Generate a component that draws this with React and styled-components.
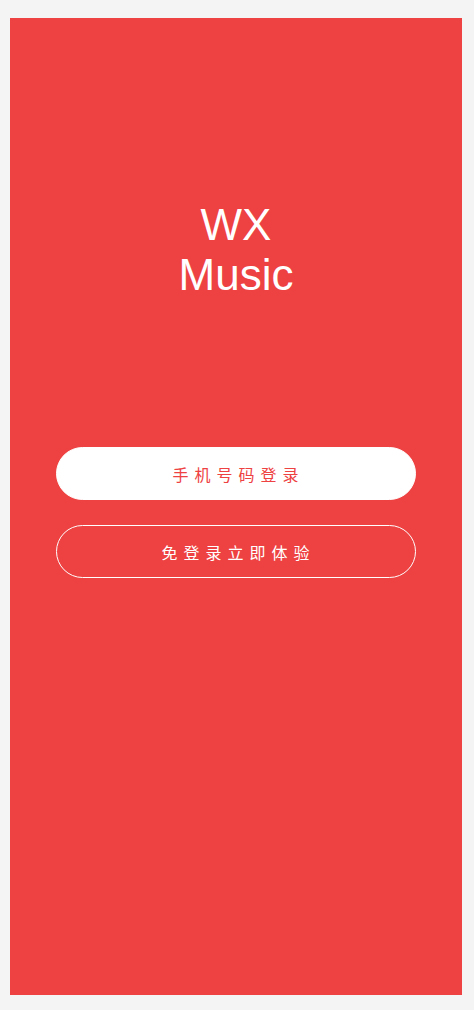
import React from "react";
import styled, { createGlobalStyle } from "styled-components";

const GlobalStyle = createGlobalStyle`
  html, body {
    margin: 0;
    padding: 0;
    background: #f4f4f4;
  }
  body {
    font-family: "Liberation Sans", "Noto Sans CJK SC", sans-serif;
  }
  * { box-sizing: border-box; }
`;

const Screen = styled.div`
  width: 474px;
  height: 1010px;
  padding: 18px 12px 15px 10px;
  background: #f4f4f4;
`;

const Panel = styled.main`
  height: 100%;
  background: #ee4141;
  display: flex;
  flex-direction: column;
  align-items: center;
`;

const Title = styled.h1`
  margin: 182px 0 0;
  font-family: "Liberation Sans", "Noto Sans", sans-serif;
  font-weight: 400;
  font-size: 44px;
  line-height: 50px;
  color: #ffffff;
  text-align: center;
`;

const Actions = styled.div`
  margin-top: 147px;
  display: flex;
  flex-direction: column;
  gap: 25px;
  width: 360px;
  margin-left: -1px;
`;

const Button = styled.button`
  height: 53px;
  width: 100%;
  border-radius: 27px;
  border: 1px solid #ffffff;
  background: ${(p) => (p.$filled ? "#ffffff" : "transparent")};
  color: ${(p) => (p.$filled ? "#ee4141" : "#ffffff")};
  font-family: "Noto Sans CJK SC", "Liberation Sans", sans-serif;
  font-size: 16px;
  letter-spacing: 6px;
  padding: 0 0 0 6px;
  cursor: pointer;
`;

export default function App() {
  return (
    <>
      <GlobalStyle />
      <Screen>
        <Panel>
          <Title>
            WX
            <br />
            Music
          </Title>
          <Actions>
            <Button $filled>手机号码登录</Button>
            <Button>免登录立即体验</Button>
          </Actions>
        </Panel>
      </Screen>
    </>
  );
}
